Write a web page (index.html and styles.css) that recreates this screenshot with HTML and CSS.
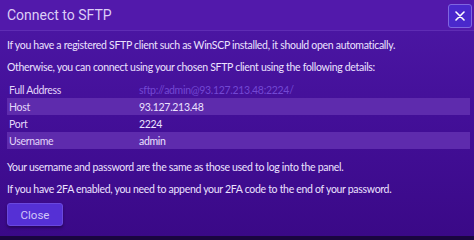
FILE: index.html
```html
<!DOCTYPE html>
<html>
<head>
<meta charset="utf-8">
<link rel="stylesheet" href="styles.css">
</head>
<body>
<div class="modal">
  <div class="header">
    <h1 class="title">Connect to SFTP</h1>
    <button class="x-btn" aria-label="Close">
      <svg width="10" height="10" viewBox="0 0 10 10"><path d="M1 1L9 9M9 1L1 9" stroke="#fff" stroke-width="1.6" stroke-linecap="round"/></svg>
    </button>
  </div>
  <div class="body">
    <p class="text">If you have a registered SFTP client such as WinSCP installed, it should open automatically.</p>
    <p class="text">Otherwise, you can connect using your chosen SFTP client using the following details:</p>
    <div class="table">
      <div class="row"><span class="key">Full Address</span><a class="val link">sftp://admin@93.127.213.48:2224/</a></div>
      <div class="row alt"><span class="key">Host</span><span class="val">93.127.213.48</span></div>
      <div class="row"><span class="key">Port</span><span class="val">2224</span></div>
      <div class="row alt"><span class="key">Username</span><span class="val">admin</span></div>
    </div>
    <p class="text">Your username and password are the same as those used to log into the panel.</p>
    <p class="text last">If you have 2FA enabled, you need to append your 2FA code to the end of your password.</p>
    <button class="close-btn">Close</button>
  </div>
</div>
</body>
</html>
```
FILE: styles.css
```css
html, body { margin: 0; padding: 0; }
body {
  width: 474px;
  height: 240px;
  overflow: hidden;
  background: #1a0640;
}
.modal {
  height: 236px;
  background: linear-gradient(180deg, #4d18a6 0%, #430f98 50%, #3a0987 100%);
  display: flex;
  flex-direction: column;
}
.header {
  height: 30px;
  display: flex;
  align-items: center;
  justify-content: space-between;
  padding: 0 2px 0 7px;
  background: #5219ab;
  border-bottom: 1px solid #5f2cb4;
}
.title {
  margin: 0;
  font-family: Roboto, sans-serif;
  font-weight: 400;
  font-size: 14px;
  color: #dccdf6;
}
.x-btn {
  width: 24px;
  height: 24px;
  margin-top: 2px;
  padding: 0;
  background: #4a28cc;
  border: 1px solid #7f66e0;
  border-radius: 3px;
  display: flex;
  align-items: center;
  justify-content: center;
}
.body {
  padding: 8px 4px 0 7px;
  font-family: Lato, sans-serif;
  font-size: 10.5px;
  letter-spacing: -0.3px;
  color: #ece2ff;
}
.text {
  margin: 0 0 9px;
  line-height: 13px;
}
.text.last {
  margin-bottom: 7px;
}
.table {
  margin: -2px 0 12px;
}
.row {
  display: flex;
  height: 17px;
  align-items: center;
}
.row.alt {
  background: #5e2bad;
}
.key {
  width: 130px;
  padding-left: 2px;
  color: #e3d6fa;
}
.val {
  color: #ece2ff;
}
.link {
  color: #7348d3;
}
.close-btn {
  display: block;
  margin-top: 0;
  width: 56px;
  height: 23px;
  background: #5530d5;
  border: 1px solid #6a48de;
  border-radius: 3px;
  font-family: Roboto, sans-serif;
  font-size: 11.5px;
  color: #d2c6f7;
  box-shadow: 0 2px 3px rgba(0,0,0,0.35);
}
```
